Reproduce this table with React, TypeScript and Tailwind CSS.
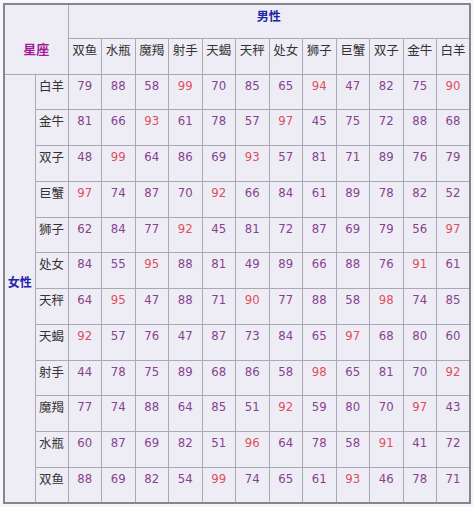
const signs = ["双鱼", "水瓶", "魔羯", "射手", "天蝎", "天秤", "处女", "狮子", "巨蟹", "双子", "金牛", "白羊"];

const rows: [string, number[]][] = [
  ["白羊", [79, 88, 58, 99, 70, 85, 65, 94, 47, 82, 75, 90]],
  ["金牛", [81, 66, 93, 61, 78, 57, 97, 45, 75, 72, 88, 68]],
  ["双子", [48, 99, 64, 86, 69, 93, 57, 81, 71, 89, 76, 79]],
  ["巨蟹", [97, 74, 87, 70, 92, 66, 84, 61, 89, 78, 82, 52]],
  ["狮子", [62, 84, 77, 92, 45, 81, 72, 87, 69, 79, 56, 97]],
  ["处女", [84, 55, 95, 88, 81, 49, 89, 66, 88, 76, 91, 61]],
  ["天秤", [64, 95, 47, 88, 71, 90, 77, 88, 58, 98, 74, 85]],
  ["天蝎", [92, 57, 76, 47, 87, 73, 84, 65, 97, 68, 80, 60]],
  ["射手", [44, 78, 75, 89, 68, 86, 58, 98, 65, 81, 70, 92]],
  ["魔羯", [77, 74, 88, 64, 85, 51, 92, 59, 80, 70, 97, 43]],
  ["水瓶", [60, 87, 69, 82, 51, 96, 64, 78, 58, 91, 41, 72]],
  ["双鱼", [88, 69, 82, 54, 99, 74, 65, 61, 93, 46, 78, 71]],
];

const cjk = "font-['Noto_Sans_CJK_SC',sans-serif]";
const num = "font-['DejaVu_Sans_Condensed','Liberation_Sans',sans-serif]";
const cell = "border border-[#a9a9b6] align-top text-center pt-[3px] leading-[16px]";

export default function App() {
  return (
    <div className="min-h-screen bg-[#f7f7fb] p-[3px]">
      <table className="table-fixed border-collapse border-2 border-[#85858f] bg-[#eeedf5] w-[466px] h-[500px]">
        <colgroup>
          <col className="w-[31px]" />
          <col className="w-[33px]" />
          {signs.map((s) => (
            <col key={s} className="w-[33.5px]" />
          ))}
        </colgroup>
        <thead>
          <tr className="h-[34px]">
            <th
              colSpan={2}
              rowSpan={2}
              className={`${cell} ${cjk} pt-[36px] text-[13px] font-bold text-[#a11c96]`}
            >
              星座
            </th>
            <th colSpan={12} className={`${cell} ${cjk} text-[12px] font-bold text-[#2323a8]`}>
              男性
            </th>
          </tr>
          <tr className="h-[36px]">
            {signs.map((s) => (
              <th key={s} className={`${cell} ${cjk} text-[12.5px] font-normal text-[#333]`}>
                {s}
              </th>
            ))}
          </tr>
        </thead>
        <tbody>
          {rows.map(([name, vals], i) => (
            <tr key={name + i} className="h-[35.75px]">
              {i === 0 && (
                <th
                  rowSpan={12}
                  className={`border border-[#a9a9b6] align-middle pb-[12px] ${cjk} text-[12px] font-bold text-[#2323a8]`}
                >
                  女性
                </th>
              )}
              <td className={`${cell} ${cjk} text-[12.5px] text-[#333]`}>{name}</td>
              {vals.map((v, j) => (
                <td
                  key={j}
                  className={`${cell} ${num} text-[13px] ${v >= 90 ? "text-[#e04d5d]" : "text-[#87428f]"}`}
                >
                  {v}
                </td>
              ))}
            </tr>
          ))}
        </tbody>
      </table>
    </div>
  );
}
